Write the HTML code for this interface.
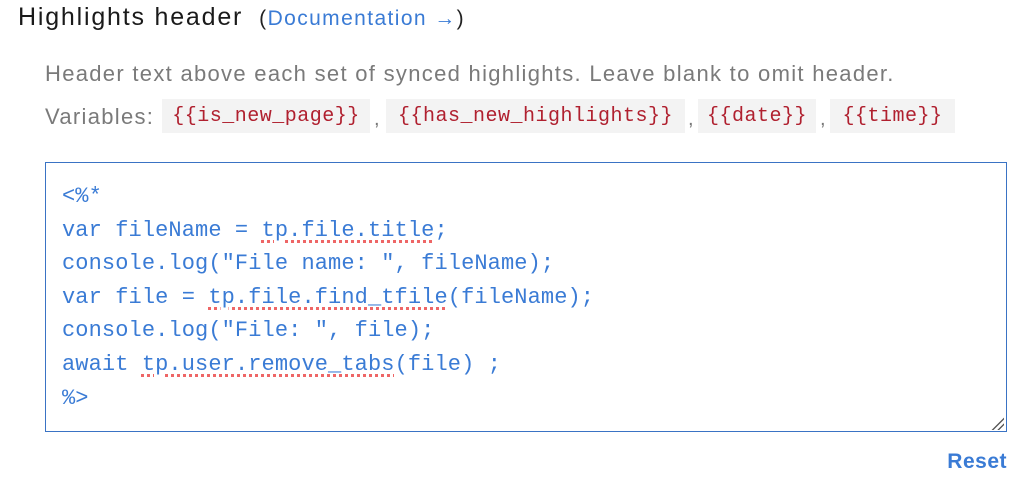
<!DOCTYPE html>
<html><head><style>
body{margin:0;width:1024px;height:499px;background:#fff;overflow:hidden;position:relative;font-family:"Liberation Sans",sans-serif}
.a{position:absolute;white-space:nowrap}
.h{left:18px;top:3px;font-size:25px;color:#1a1a1a;letter-spacing:1.8px}
.h span{font-size:21px;color:#222;letter-spacing:1.4px}
.h a{color:#3a7bd5;text-decoration:none}
.d{left:45px;top:61px;font-size:22px;color:#7a7a7a;letter-spacing:1.3px}
.v{left:45px;top:104px;font-size:22px;color:#7a7a7a;letter-spacing:1.3px}
.c{position:absolute;top:99px;height:34px;background:#f3f3f3;color:#b0202f;font-family:"Liberation Mono",monospace;font-size:20px;letter-spacing:0.5px;line-height:36px;text-align:center}
.cm{position:absolute;top:108px;color:#777;font-size:20px}
.box{position:absolute;left:45px;top:162px;width:960px;height:268px;border:1px solid #3a73c4}
pre{position:absolute;left:62px;top:180px;margin:0;font-family:"Liberation Mono",monospace;font-size:22px;letter-spacing:0.1px;line-height:33.6px;color:#3a7bd5}
u{text-decoration:underline dotted #e66;text-decoration-thickness:3px;text-underline-offset:4px}
.r{right:17px;top:450px;font-size:21px;letter-spacing:0.5px;color:#3a7bd5;font-weight:bold}
.rz{position:absolute;left:990px;top:416px;width:14px;height:14px;background:linear-gradient(135deg,transparent 55%,#555 56%,#555 62%,transparent 63%,transparent 75%,#555 76%,#555 82%,transparent 83%)}
</style></head><body>
<div class="a h">Highlights header <span>&nbsp;(<a>Documentation →</a>)</span></div>
<div class="a d">Header text above each set of synced highlights. Leave blank to omit header.</div>
<div class="a v">Variables:</div>
<div class="c" style="left:162px;width:208px">{{is_new_page}}</div><div class="cm" style="left:374px">,</div>
<div class="c" style="left:386px;width:299px">{{has_new_highlights}}</div><div class="cm" style="left:688px">,</div>
<div class="c" style="left:698px;width:118px">{{date}}</div><div class="cm" style="left:820px">,</div>
<div class="c" style="left:830px;width:125px">{{time}}</div>
<div class="box"></div><div class="rz"></div>
<pre>&lt;%*
var fileName = <u>tp.file.title</u>;
console.log("File name: ", fileName);
var file = <u>tp.file.find_tfile</u>(fileName);
console.log("File: ", file);
await <u>tp.user.remove_tabs</u>(file) ;
%&gt;</pre>
<div class="a r">Reset</div>
</body></html>
